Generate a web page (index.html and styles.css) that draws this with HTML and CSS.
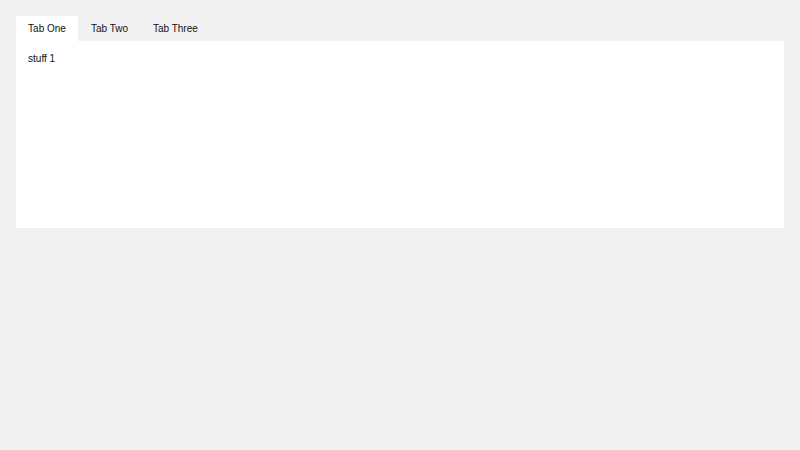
FILE: index.html
```html
<!DOCTYPE html>
<html>
<head>
<meta charset="utf-8">
<link rel="stylesheet" href="styles.css">
</head>
<body>
<div class="tabs">
  <div class="tab-bar">
    <div class="tab active">Tab One</div>
    <div class="tab">Tab Two</div>
    <div class="tab">Tab Three</div>
  </div>
  <div class="panel">stuff 1</div>
</div>
</body>
</html>
```
FILE: styles.css
```css
html, body {
  margin: 0;
  padding: 0;
  background: #f1f1f1;
  font-family: "Liberation Sans", Arial, sans-serif;
  font-size: 10px;
  color: #111;
}
.tabs {
  padding: 15.6px;
}
.tab-bar {
  display: flex;
}
.tab {
  height: 25px;
  line-height: 25px;
  padding: 0 12.5px;
}
.tab.active {
  background: #fff;
}
.panel {
  background: #fff;
  height: 187.5px;
  padding: 12.5px;
  box-sizing: border-box;
}
```
